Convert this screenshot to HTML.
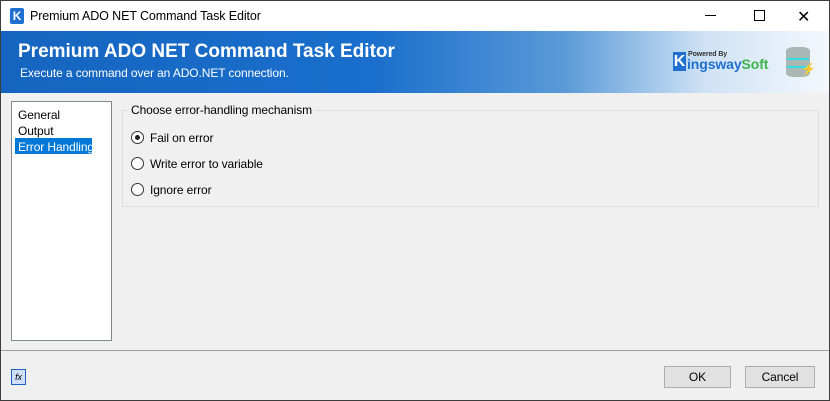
<!DOCTYPE html><html><head><style>
body{margin:0;width:830px;height:401px;overflow:hidden;font-family:"Liberation Sans",sans-serif;font-size:12px;letter-spacing:-0.1px}
.win{position:absolute;left:0;top:0;width:828px;height:399px;border:1px solid #3c3c3c;background:#f0f0f0;}
.a{position:absolute}
.tb{left:0;top:0;width:828px;height:30px;background:#fff}
.ban{left:0;top:30px;width:828px;height:62px;background:linear-gradient(90deg,#1565c0 0%,#1a6fcc 45%,#5a9ad8 68%,#cfe2f5 85%,#f4f8fc 100%)}
.rad{width:11px;height:11px;border:1px solid #333;border-radius:50%;background:#fff}
.btn{height:20px;border:1px solid #adadad;background:#e1e1e1;text-align:center;line-height:20px}
</style></head><body><div class="win">
<div class="a tb"></div>
<div class="a" style="left:9px;top:7px;width:14px;height:16px;background:#1f6fd0;border-radius:2px;color:#fff;font-weight:bold;font-size:12px;line-height:16px;text-align:center">K</div>
<div class="a" style="left:29px;top:8px;font-size:12.5px;color:#000">Premium ADO NET Command Task Editor</div>
<div class="a" style="left:704px;top:14px;width:11px;height:1px;background:#000"></div>
<div class="a" style="left:753px;top:9px;width:9px;height:9px;border:1px solid #000"></div>
<div class="a" style="left:796px;top:6px;font-size:16px;color:#000">✕</div>
<div class="a ban"></div>
<div class="a" style="left:17px;top:40px;font-size:19px;font-weight:bold;color:#fff;letter-spacing:0">Premium ADO NET Command Task Editor</div>
<div class="a" style="left:19px;top:65px;font-size:12px;color:#fff">Execute a command over an ADO.NET connection.</div>
<div class="a" style="left:672px;top:51px;width:13px;height:19px;background:#1f6fd0;color:#fff;font-weight:bold;font-size:16px;line-height:19px;text-align:center">K</div>
<div class="a" style="left:687px;top:50px;font-size:7px;font-weight:bold;color:#333">Powered By</div>
<div class="a" style="left:686px;top:55px;font-size:14px;font-weight:bold;color:#1f6fd0">ingsway<span style="color:#3cb44a">Soft</span></div>
<div class="a" style="left:785px;top:46px;width:24px;height:30px;background:#a9b8b5;border-radius:8px/4px"></div>
<div class="a" style="left:786px;top:57px;width:22px;height:2px;background:#3dd"></div>
<div class="a" style="left:786px;top:65px;width:22px;height:2px;background:#3dd"></div>
<div class="a" style="left:800px;top:61px;color:#f4a020;font-size:12px">⚡</div>
<div class="a" style="left:10px;top:100px;width:99px;height:238px;background:#fff;border:1px solid #828790"></div>
<div class="a" style="left:17px;top:107px">General</div>
<div class="a" style="left:17px;top:123px">Output</div>
<div class="a" style="left:14px;top:137px;width:77px;height:16px;background:#0078d7"></div>
<div class="a" style="left:17px;top:139px;color:#fff;white-space:nowrap">Error Handling</div>
<div class="a" style="left:121px;top:109px;width:695px;height:95px;border:1px solid #dcdcdc"></div>
<div class="a" style="left:127px;top:102px;background:#f0f0f0;padding:0 3px">Choose error-handling mechanism</div>
<div class="a rad" style="left:130px;top:130px"><div style="margin:3px;width:5px;height:5px;border-radius:50%;background:#222"></div></div>
<div class="a" style="left:149px;top:130px">Fail on error</div>
<div class="a rad" style="left:130px;top:156px"></div>
<div class="a" style="left:149px;top:156px">Write error to variable</div>
<div class="a rad" style="left:130px;top:182px"></div>
<div class="a" style="left:149px;top:182px">Ignore error</div>
<div class="a" style="left:0;top:349px;width:828px;height:1px;background:#a0a0a0"></div>
<div class="a" style="left:10px;top:368px;width:13px;height:14px;border:1px solid #2060c0;background:#cfe0f8;font-size:9px;font-style:italic;text-align:center;line-height:14px">fx</div>
<div class="a btn" style="left:663px;top:365px;width:65px">OK</div>
<div class="a btn" style="left:744px;top:365px;width:68px">Cancel</div>
</div></body></html>
